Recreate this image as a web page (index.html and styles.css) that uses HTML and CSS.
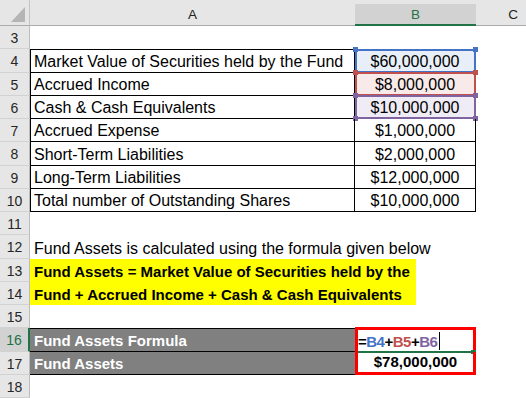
FILE: index.html
```html
<!DOCTYPE html>
<html>
<head>
<meta charset="utf-8">
<link rel="stylesheet" href="styles.css">
</head>
<body>
<div class="sheet">
  <div class="corner"><span class="tri"></span></div>
  <div class="colhead">A</div>
  <div class="colhead sel">B</div>
  <div class="colhead">C</div>

  <div class="rh">3</div><div class="c"></div><div class="c"></div><div class="c"></div>

  <div class="rh">4</div>
  <div class="c a tb top">Market Value of Securities held by the Fund</div>
  <div class="c b tb top f-blue">$60,000,000<span class="ref ref-blue"><i class="tl"></i><i class="tr"></i><i class="bl"></i><i class="br"></i></span></div>
  <div class="c"></div>

  <div class="rh">5</div>
  <div class="c a tb">Accrued Income</div>
  <div class="c b tb f-red">$8,000,000<span class="ref ref-red"><i class="tl"></i><i class="tr"></i><i class="bl"></i><i class="br"></i></span></div>
  <div class="c"></div>

  <div class="rh">6</div>
  <div class="c a tb">Cash &amp; Cash Equivalents</div>
  <div class="c b tb f-purple">$10,000,000<span class="ref ref-purple"><i class="tl"></i><i class="tr"></i><i class="bl"></i><i class="br"></i></span></div>
  <div class="c"></div>

  <div class="rh">7</div>
  <div class="c a tb">Accrued Expense</div>
  <div class="c b tb">$1,000,000</div>
  <div class="c"></div>

  <div class="rh">8</div>
  <div class="c a tb">Short-Term Liabilities</div>
  <div class="c b tb">$2,000,000</div>
  <div class="c"></div>

  <div class="rh">9</div>
  <div class="c a tb">Long-Term Liabilities</div>
  <div class="c b tb">$12,000,000</div>
  <div class="c"></div>

  <div class="rh">10</div>
  <div class="c a tb">Total number of Outstanding Shares</div>
  <div class="c b tb">$10,000,000</div>
  <div class="c"></div>

  <div class="rh">11</div><div class="c"></div><div class="c"></div><div class="c"></div>

  <div class="rh">12</div>
  <div class="c span2">Fund Assets is calculated using the formula given below</div>
  <div class="c"></div>

  <div class="rh">13</div>
  <div class="c span2 hl">Fund Assets = Market Value of Securities held by the</div>
  <div class="c"></div>

  <div class="rh">14</div>
  <div class="c span2 hl">Fund + Accrued Income + Cash &amp; Cash Equivalents</div>
  <div class="c"></div>

  <div class="rh">15</div><div class="c"></div><div class="c"></div><div class="c"></div>

  <div class="rh sel">16</div>
  <div class="c g g-top">Fund Assets Formula</div>
  <div class="c fx"><span class="eq">=</span><span class="r1">B4</span>+<span class="r2">B5</span>+<span class="r3">B6</span><span class="caret"></span></div>
  <div class="c"></div>

  <div class="rh">17</div>
  <div class="c g">Fund Assets</div>
  <div class="c res">$78,000,000</div>
  <div class="c"></div>

  <div class="rh">18</div><div class="c"></div><div class="c"></div><div class="c"></div>
</div>
</body>
</html>
```

FILE: styles.css
```css
html, body {
  margin: 0;
  padding: 0;
  background: #ffffff;
  overflow: hidden;
}

body {
  font-family: "Liberation Sans", Arial, sans-serif;
  color: #000;
}

.sheet {
  display: grid;
  grid-template-columns: 30px 325px 121px 74px;
  grid-template-rows: 26px repeat(16, 23.25px);
  width: 550px;
}

.sheet > div {
  box-sizing: border-box;
  min-width: 0;
}

/* header row */
.corner {
  position: relative;
  background: #e6e6e6;
  border-right: 1px solid #c4c4c4;
  border-bottom: 1px solid #ababab;
}

.tri {
  position: absolute;
  right: 4px;
  bottom: 3px;
  width: 14px;
  height: 15px;
  background: #b5b5b5;
  clip-path: polygon(100% 0, 100% 100%, 0 100%);
}

.colhead {
  display: flex;
  align-items: center;
  justify-content: center;
  background: #e6e6e6;
  border-top: 4px solid #e6e6e6;
  border-bottom: 1px solid #ababab;
  font-size: 13.5px;
  color: #222;
}

.colhead.sel {
  background: #d2d2d2;
  color: #217346;
  border-bottom: 2px solid #217346;
  padding-top: 1px;
}

/* row headers */
.rh {
  display: flex;
  align-items: center;
  justify-content: center;
  padding-top: 2px;
  background: #e6e6e6;
  border-right: 1px solid #bcbcbc;
  border-bottom: 1px solid #d2d2d2;
  font-size: 14px;
  color: #262626;
}

.rh.sel {
  background: #d2d2d2;
  color: #217346;
  border-right: 2px solid #217346;
}

/* cells */
.c {
  position: relative;
  display: flex;
  align-items: flex-end;
  white-space: nowrap;
  font-size: 16px;
  line-height: 18px;
  padding: 0 0 1px 4px;
}

.span2 {
  grid-column: span 2;
}

.a.tb {
  border-left: 1px solid #000;
  border-right: 1px solid #000;
  border-bottom: 1px solid #000;
  padding-left: 3px;
}

.b.tb {
  justify-content: center;
  padding-left: 0;
  border-right: 1px solid #000;
  border-bottom: 1px solid #000;
}

.tb.top {
  border-top: 1px solid #000;
}

.f-blue { background: #e9eff9; }
.f-red { background: #f9eaea; }
.f-purple { background: #f0ecf6; }

/* formula reference highlight boxes */
.ref {
  position: absolute;
  top: -1px;
  right: -1px;
  bottom: -1px;
  left: 0;
  border: 2px solid;
}

.ref i {
  position: absolute;
  width: 5px;
  height: 5px;
  background: currentColor;
}

.ref .tl { top: -4px; left: -4px; }
.ref .tr { top: -4px; right: -4px; }
.ref .bl { bottom: -4px; left: -4px; }
.ref .br { bottom: -4px; right: -4px; }

.ref-blue { border-color: #4472c4; color: #4472c4; }
.ref-red { border-color: #c0504d; color: #c0504d; }
.ref-purple { border-color: #8064a2; color: #8064a2; }

/* yellow formula text */
.hl {
  background: linear-gradient(to right, #ffff00 386px, transparent 386px);
  font-weight: bold;
  font-size: 15px;
}

/* gray summary rows */
.g {
  background: #808080;
  color: #ffffff;
  font-weight: bold;
  font-size: 15px;
  border-bottom: 1px solid #000;
}

.g-top {
  border-top: 1px solid #000;
}

.fx {
  border: 3px solid #ff0000;
  border-bottom: none;
  margin-top: -1px;
  padding-left: 0;
  font-weight: bold;
  font-size: 15px;
  letter-spacing: -0.5px;
}

.fx::after {
  content: "";
  position: absolute;
  left: 0;
  right: 0;
  bottom: -1px;
  height: 2px;
  background: #217346;
}

.fx::before {
  content: "";
  position: absolute;
  right: -3px;
  bottom: -2px;
  width: 5px;
  height: 4px;
  background: #217346;
}

.r1 { color: #4472c4; }
.r2 { color: #c0504d; }
.r3 { color: #8064a2; }

.caret {
  display: inline-block;
  width: 1px;
  height: 18px;
  margin-left: 2px;
  margin-bottom: 1px;
  background: #000;
}

.res {
  justify-content: center;
  padding-left: 0;
  border: 3px solid #ff0000;
  border-top: none;
  font-weight: bold;
  font-size: 15px;
}
```
